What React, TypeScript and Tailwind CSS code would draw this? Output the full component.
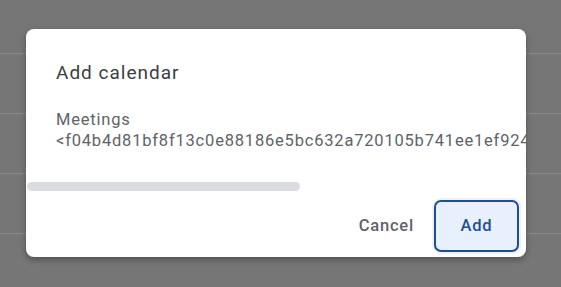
import React from "react";

export default function App() {
  const rows = [0, 1, 2, 3];
  return (
    <div className="relative w-[561px] h-[287px] overflow-hidden bg-[#767676] font-['Roboto',sans-serif]">
      <div className="flex flex-col pt-[53px]">
        {rows.map((r) => (
          <div key={r} className="h-[60px] border-t border-[#888888]" />
        ))}
      </div>

      <div className="absolute left-[26px] top-[29px] w-[500px] h-[228px] bg-white rounded-[8px] shadow-[0_3px_6px_rgba(0,0,0,0.3)] flex flex-col overflow-hidden">
        <div className="pt-[32px] pl-[30px] text-[19px] leading-[24px] tracking-[1px] text-[#3c4043]">
          Add calendar
        </div>
        <div className="mt-[25px] pl-[30px] text-[16.5px] leading-[20.5px] tracking-[0.8px] text-[#5f6368] whitespace-nowrap">
          <div>Meetings</div>
          <div>&lt;f04b4d81bf8f13c0e88186e5bc632a720105b741ee1ef924a7c3d90b5e61f28c@group.calendar.google.com&gt;</div>
        </div>
        <div className="mt-[31px] ml-[1px] w-[273px] h-[9px] rounded-full bg-[#dadce0]" />
        <div className="mt-[9px] flex justify-end items-center pr-[7px]">
          <button className="h-[52px] px-[20px] text-[16.5px] tracking-[0.8px] font-medium text-[#5f6368]">
            Cancel
          </button>
          <button className="w-[85px] h-[52px] rounded-[7px] border-2 border-[#1f4e8c] bg-[#e8f0fe] ring-2 ring-[#edf2fa] text-[16.5px] tracking-[0.8px] font-medium text-[#1e4f91]">
            Add
          </button>
        </div>
      </div>
    </div>
  );
}
